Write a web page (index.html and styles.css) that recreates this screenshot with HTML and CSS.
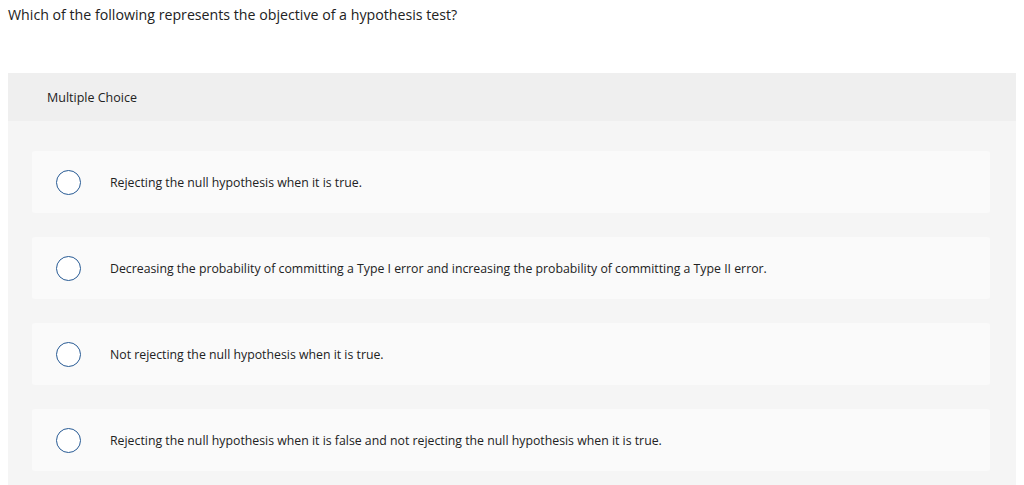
FILE: index.html
```html
<!DOCTYPE html>
<html>
<head>
<meta charset="utf-8">
<link rel="stylesheet" href="styles.css">
</head>
<body>
<p class="question">Which of the following represents the objective of a hypothesis test?</p>
<div class="panel">
  <div class="panel-head">Multiple Choice</div>
  <div class="panel-body">
    <div class="option"><span class="radio"></span><span class="label">Rejecting the null hypothesis when it is true.</span></div>
    <div class="option"><span class="radio"></span><span class="label">Decreasing the probability of committing a Type I error and increasing the probability of committing a Type II error.</span></div>
    <div class="option"><span class="radio"></span><span class="label">Not rejecting the null hypothesis when it is true.</span></div>
    <div class="option"><span class="radio"></span><span class="label">Rejecting the null hypothesis when it is false and not rejecting the null hypothesis when it is true.</span></div>
  </div>
</div>
</body>
</html>
```
FILE: styles.css
```css
html, body {
  margin: 0;
  padding: 0;
  background: #ffffff;
}
body {
  font-family: "Open Sans", "Lato", sans-serif;
  color: #222222;
  padding: 0 8px;
}
.question {
  margin: 0;
  padding-top: 5px;
  height: 68px;
  font-size: 14.2px;
  line-height: 20px;
}
.panel {
  background: #f5f5f5;
}
.panel-head {
  background: #efefef;
  height: 48px;
  display: flex;
  align-items: center;
  padding-left: 39px;
  font-size: 12.5px;
}
.panel-body {
  padding: 30px 26px 24px 24px;
  display: flex;
  flex-direction: column;
  gap: 24px;
}
.option {
  background: #fafafa;
  border-radius: 3px;
  height: 62px;
  display: flex;
  align-items: center;
  padding-left: 24px;
}
.radio {
  width: 23px;
  height: 23px;
  border: 1.5px solid #275a94;
  border-radius: 50%;
  background: #ffffff;
  flex: none;
}
.label {
  margin-left: 29px;
  font-size: 12.3px;
}
```
